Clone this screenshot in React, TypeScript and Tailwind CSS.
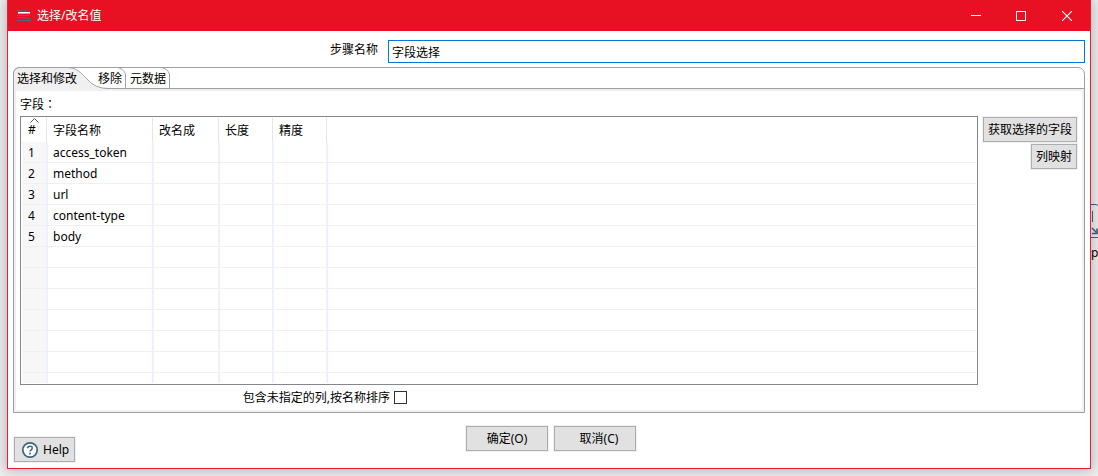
import React, { useState } from "react";

const fields = ["access_token", "method", "url", "content-type", "body", "", "", "", "", "", ""];
const headers = ["字段名称", "改名成", "长度", "精度"];
const buttonStyle =
  "flex h-[25px] items-center justify-center whitespace-nowrap border border-[#adadad] bg-[#e1e1e1] outline outline-1 outline-[#f0f0f0]";

function TitleBar() {
  return (
    <header className="flex h-[31px] items-center bg-[#e81123] pl-[9px] text-white">
      <svg width="14" height="11" viewBox="0 0 14 11" shapeRendering="crispEdges" aria-hidden="true">
        <path d="M0 .5h9M0 1.5h1M9 1.5h1M0 3.5h1" stroke="#765067" />
        <path d="M1 2.5h12" stroke="#fff" />
        <path d="M1 3.5h12" stroke="#b9a9b4" />
        <path d="M0 5.5h13" stroke="#56647e" />
        <path d="M0 7.5h9M0 8.5h1M8 8.5h6" stroke="#765067" />
        <path d="M0 10.5h14" stroke="#56647e" />
      </svg>
      <h1 className="ml-[6px] flex-1 pt-px text-[12px]">选择/改名值</h1>
      <button aria-label="最小化" className="flex h-[31px] w-[44px] items-center justify-center">
        <svg width="10" height="11" shapeRendering="crispEdges"><path d="M0 5.5h10" stroke="white" /></svg>
      </button>
      <button aria-label="最大化" className="flex h-[31px] w-[46px] items-center justify-center">
        <svg width="10" height="10" shapeRendering="crispEdges"><path d="M.5.5h9v9h-9z" fill="none" stroke="white" /></svg>
      </button>
      <button aria-label="关闭" className="flex h-[31px] w-[46px] items-center justify-center">
        <svg width="10" height="10"><path d="M0 0l10 10M10 0l-10 10" stroke="white" strokeWidth="1.1" /></svg>
      </button>
    </header>
  );
}

function Tabs() {
  return (
    <div role="tablist" className="flex h-[21px] border-b border-[#a0a0a0]">
      <button role="tab" aria-selected="true" className="relative h-[20px] w-[82px] pl-[3px] pt-[2px] text-left">
        <svg className="absolute -left-px -top-px" width="96" height="22" viewBox="0 0 96 22" aria-hidden="true">
          <path d="M1 22V7Q1 1 7 1H54C63 1 67 6 74 13Q82 21 94 21.5V22Z" fill="#f0f0f0" />
          <path d="M.5 22V7Q.5 .5 7 .5H54C63 .5 67 5 74 12Q82 21.5 95 21.5" fill="none" stroke="#a0a0a0" />
        </svg>
        <span className="relative whitespace-nowrap">选择和修改</span>
      </button>
      <button role="tab" aria-selected="false" className="relative h-[20px] w-[30px] pl-[2px] pt-[2px] text-left">
        移除
        <svg className="absolute -top-px right-0" width="9" height="22" aria-hidden="true">
          <path d="M0 .5Q6 1 8.5 7V21" fill="none" stroke="#a0a0a0" />
        </svg>
      </button>
      <button role="tab" aria-selected="false" className="relative h-[20px] w-[44px] pl-1 pt-[2px] text-left">
        元数据
        <svg className="absolute -top-px right-0" width="9" height="22" aria-hidden="true">
          <path d="M0 .5Q6 1 8.5 7V21" fill="none" stroke="#a0a0a0" />
        </svg>
      </button>
    </div>
  );
}

function FieldTable() {
  return (
    <div className="min-w-0 flex-1 border border-[#828790] p-px">
      <table className="w-full table-fixed border-separate border-spacing-0 text-left">
        <colgroup>
          <col className="w-[26px]" />
          <col className="w-[106px]" />
          <col className="w-[66px]" />
          <col className="w-[54px]" />
          <col className="w-[54px]" />
          <col />
        </colgroup>
        <thead>
          <tr className="h-[24px]">
            <th className="relative p-0 pl-[6px] font-normal">
              #
              <svg className="absolute left-[8px] top-0" width="9" height="5" aria-hidden="true">
                <path d="M.5 4.5l4-4 4 4" fill="none" stroke="#555" />
              </svg>
              <span className="absolute right-px top-0 h-full w-px bg-[#e5e5e5]" />
            </th>
            {headers.map((h) => (
              <th key={h} className="relative p-0 pl-[5px] pt-px font-normal">
                {h}
                <span className="absolute right-px top-0 h-full w-px bg-[#e5e5e5]" />
              </th>
            ))}
            <th className="p-0" />
          </tr>
        </thead>
        <tbody>
          {fields.map((name, i) => (
            <tr key={i} className="h-[21px]">
              <td className="border-b border-r-2 border-b-[#f0f0f0] border-r-[#ecf1fb] bg-[#f7f7f7] p-0 pl-[6px] pt-[2px]">
                {name ? i + 1 : ""}
              </td>
              <td className="border-b border-r-2 border-b-[#f0f0f0] border-r-[#ecf1fb] p-0 pl-[5px] pt-[2px]">{name}</td>
              <td className="border-b border-r-2 border-b-[#f0f0f0] border-r-[#ecf1fb] p-0" />
              <td className="border-b border-r-2 border-b-[#f0f0f0] border-r-[#ecf1fb] p-0" />
              <td className="border-b border-r-2 border-b-[#f0f0f0] border-r-[#ecf1fb] p-0" />
              <td className="border-b border-b-[#f0f0f0] p-0" />
            </tr>
          ))}
          <tr className="h-[10px]">
            <td className="border-r-2 border-[#ecf1fb] bg-[#f7f7f7] p-0" />
            <td className="border-r-2 border-[#ecf1fb] p-0" />
            <td className="border-r-2 border-[#ecf1fb] p-0" />
            <td className="border-r-2 border-[#ecf1fb] p-0" />
            <td className="border-r-2 border-[#ecf1fb] p-0" />
            <td className="p-0" />
          </tr>
        </tbody>
      </table>
    </div>
  );
}

export default function App() {
  const [step, setStep] = useState("字段选择");
  return (
    <div className="relative overflow-hidden bg-[#f0f0f0] px-[7px] pb-[7px] font-['Noto_Sans','Noto_Sans_CJK_SC',sans-serif] text-[12px] leading-[18px] text-black">
      <div className="absolute right-0 top-[204px] w-[7px] overflow-hidden" aria-hidden="true">
        <svg width="7" height="34">
          <path d="M0 .5h5l2 1M0 33.5h7M1.5 7v11" fill="none" stroke="#3d6480" />
          <path d="M1 24l5 5M6 24.5v5H1" fill="none" stroke="#3d6480" strokeWidth="1.6" />
        </svg>
        <span className="mt-[6px] block">p</span>
      </div>
      <main className="relative border border-t-0 border-[#e81f35] bg-white shadow-[0_0_12px_2px_rgba(0,0,0,0.24)]">
        <TitleBar />
        <div className="flex pb-1 pr-[5px] pt-[9px]">
          <label htmlFor="step" className="mr-[3px] w-[35%] shrink-0 pr-[7px] pt-px text-right">步骤名称</label>
          <input
            id="step"
            value={step}
            onChange={(e) => setStep(e.target.value)}
            className="h-[23px] min-w-0 flex-1 border border-[#0078d7] bg-white px-[3px] outline-none"
          />
        </div>
        <section className="mx-[5px] rounded-t-[7px] border border-[#a0a0a0]">
          <Tabs />
          <div className="border-2 border-[#f0f0f0] pl-1 pr-[5px]">
            <h2 className="h-[25px] pt-1">
              字段<span className="font-['Noto_Sans_CJK_TC',sans-serif]">：</span>
            </h2>
            <div className="flex gap-[5px]">
              <FieldTable />
              <div className="flex flex-col items-end gap-[2px] pt-px">
                <button className={`${buttonStyle} px-1`}>获取选择的字段</button>
                <button className={`${buttonStyle} px-1`}>列映射</button>
              </div>
            </div>
            <div className="flex h-[25px] items-center">
              <label htmlFor="unspecified" className="w-[35%] text-right">包含未指定的列,按名称排序</label>
              <input id="unspecified" type="checkbox" className="ml-1 size-[13px] appearance-none border border-[#333] bg-white checked:bg-[#0078d7]" />
            </div>
          </div>
        </section>
        <footer className="grid grid-cols-[1fr_auto_1fr] pb-[6px] pl-[6px] pr-[2px] pt-[13px]">
          <button className={`${buttonStyle} mt-[11px] gap-1 justify-self-start pl-[6px] pr-[5px]`}>
            <svg width="18" height="18" viewBox="0 0 18 18" fill="none" aria-hidden="true">
              <circle cx="9" cy="9" r="7.2" fill="white" stroke="#3d6480" strokeWidth="1.7" />
              <path d="M6.7 7.2C6.7 4.5 11.3 4.5 11.3 7.1C11.3 8.8 9 8.8 9 10.6" stroke="#3d6480" strokeWidth="1.5" />
              <path d="M8.2 11.8h1.6v1.6H8.2z" fill="#3d6480" />
            </svg>
            Help
          </button>
          <div className="flex gap-[6px]">
            <button className={`${buttonStyle} w-[82px]`}>确定(O)</button>
            <button className={`${buttonStyle} w-[82px] pl-[8px]`}>取消(C)</button>
          </div>
        </footer>
      </main>
    </div>
  );
}
